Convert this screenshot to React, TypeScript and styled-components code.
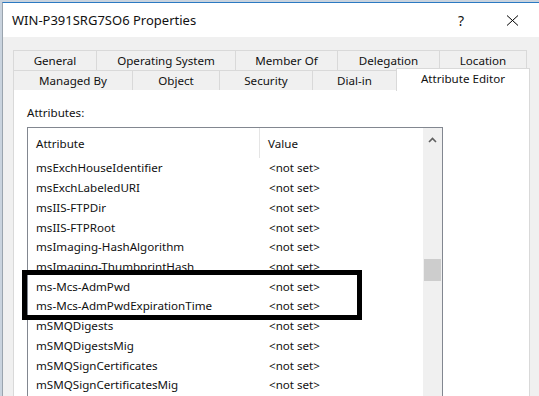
import styled, { createGlobalStyle } from 'styled-components'

const GlobalStyle = createGlobalStyle`
    html, body{
        margin: 0;
        padding: 0;
        background: #c9d3de;
    }
    body{
        font-family: "Noto Sans", "Liberation Sans", sans-serif;
        font-size: 11.6px;
        color: #111;
    }
`

const Window = styled.div`
    margin: 2px 0 0 2px;
    width: 537px;
    height: 394px;
    border-top: 1px solid #2b79c2;
    border-left: 1px solid #9aa4ae;
    background: #f0f0f0;
    overflow: hidden;
`

const TitleBar = styled.div`
    height: 34px;
    background: #fff;
    display: flex;
    align-items: center;
    padding-left: 9px;

    .title{
        flex: 1;
        font-size: 13px;
    }

    .help{
        font-size: 14px;
        width: 48px;
    }

    .close{
        width: 22px;
        margin-right: 12px;
        display: flex;
        align-items: center;
    }
`

const Body = styled.div`
    padding: 13px 0 0 10px;
`

const TabRow = styled.div`
    display: flex;
    height: 20px;
    position: relative;
    z-index: 1;
`

const Tab = styled.div<{ w: number; selected?: boolean }>`
    width: ${p => p.w}px;
    box-sizing: border-box;
    border: 1px solid #d9d9d9;
    border-bottom: none;
    margin-left: -1px;
    background: #f0f0f0;
    display: flex;
    align-items: center;
    justify-content: center;
    line-height: 1;

    &:first-child{
        margin-left: 0;
    }

    ${p => p.selected && `
        background: #fff;
        height: 23px;
        margin-top: -2px;
        padding-bottom: 3px;
        position: relative;
        z-index: 2;
    `}
`

const Panel = styled.div`
    width: 517px;
    height: 320px;
    box-sizing: border-box;
    background: #fff;
    border: 1px solid #d9d9d9;
    border-bottom: none;
    padding: 15px 13px 0;
    margin-top: -1px;

    .label{
        line-height: 16px;
        margin-bottom: 6px;
    }
`

const ListBox = styled.div`
    position: relative;
    width: 416px;
    height: 300px;
    box-sizing: border-box;
    border: 1px solid #828790;
    display: flex;
`

const ListBody = styled.div`
    flex: 1;
`

const HeaderRow = styled.div`
    display: flex;
    height: 30px;
    align-items: center;
`

const HeaderCell = styled.div<{ w?: number }>`
    width: ${p => (p.w ? `${p.w}px` : 'auto')};
    flex: ${p => (p.w ? 'none' : '1')};
    box-sizing: border-box;
    height: 100%;
    display: flex;
    align-items: center;
    padding-left: 8px;
    border-right: ${p => (p.w ? '1px solid #e5e5e5' : 'none')};
`

const Row = styled.div`
    display: flex;
    height: 19.73px;
    align-items: center;

    .name{
        width: 232px;
        padding-left: 8px;
        box-sizing: border-box;
        white-space: nowrap;
    }

    .value{
        padding-left: 9px;
    }
`

const ScrollBar = styled.div`
    width: 19px;
    background: #f0f0f0;
    display: flex;
    flex-direction: column;
    align-items: center;

    .arrow{
        height: 23px;
        display: flex;
        align-items: center;
        justify-content: center;
    }

    .thumb{
        width: 17px;
        height: 22px;
        background: #cdcdcd;
        margin-top: 108px;
    }
`

const Highlight = styled.div`
    position: absolute;
    left: -6px;
    top: 142px;
    width: 340px;
    height: 50px;
    box-sizing: border-box;
    border: 5px solid #000;
    pointer-events: none;
`

const topTabs = [
    { label: 'General', w: 84 },
    { label: 'Operating System', w: 140 },
    { label: 'Member Of', w: 103 },
    { label: 'Delegation', w: 103 },
    { label: 'Location', w: 88 },
]

const bottomTabs = [
    { label: 'Managed By', w: 120 },
    { label: 'Object', w: 88 },
    { label: 'Security', w: 94 },
    { label: 'Dial-in', w: 85 },
    { label: 'Attribute Editor', w: 134, selected: true },
]

const attributes = [
    'msExchHouseIdentifier',
    'msExchLabeledURI',
    'msIIS-FTPDir',
    'msIIS-FTPRoot',
    'msImaging-HashAlgorithm',
    'msImaging-ThumbprintHash',
    'ms-Mcs-AdmPwd',
    'ms-Mcs-AdmPwdExpirationTime',
    'mSMQDigests',
    'mSMQDigestsMig',
    'mSMQSignCertificates',
    'mSMQSignCertificatesMig',
]

const App = () => {
    return (
        <>
            <GlobalStyle />
            <Window>
                <TitleBar>
                    <span className="title">WIN-P391SRG7SO6 Properties</span>
                    <span className="help">?</span>
                    <span className="close">
                        <svg width="13" height="11" viewBox="0 0 13 11">
                            <path d="M1 0.5 L12 10.5 M12 0.5 L1 10.5" stroke="#000" strokeWidth="1" fill="none" />
                        </svg>
                    </span>
                </TitleBar>
                <Body>
                    <TabRow>
                        {topTabs.map(t => (
                            <Tab key={t.label} w={t.w}>{t.label}</Tab>
                        ))}
                    </TabRow>
                    <TabRow>
                        {bottomTabs.map(t => (
                            <Tab key={t.label} w={t.w} selected={t.selected}>{t.label}</Tab>
                        ))}
                    </TabRow>
                    <Panel>
                        <div className="label">Attributes:</div>
                        <ListBox>
                            <ListBody>
                                <HeaderRow>
                                    <HeaderCell w={232}>Attribute</HeaderCell>
                                    <HeaderCell>Value</HeaderCell>
                                </HeaderRow>
                                {attributes.map(a => (
                                    <Row key={a}>
                                        <span className="name">{a}</span>
                                        <span className="value">&lt;not set&gt;</span>
                                    </Row>
                                ))}
                            </ListBody>
                            <ScrollBar>
                                <div className="arrow">
                                    <svg width="9" height="6" viewBox="0 0 9 6">
                                        <path d="M1 5 L4.5 1.5 L8 5" stroke="#606060" strokeWidth="1.6" fill="none" />
                                    </svg>
                                </div>
                                <div className="thumb" />
                            </ScrollBar>
                            <Highlight />
                        </ListBox>
                    </Panel>
                </Body>
            </Window>
        </>
    )
}

export default App
